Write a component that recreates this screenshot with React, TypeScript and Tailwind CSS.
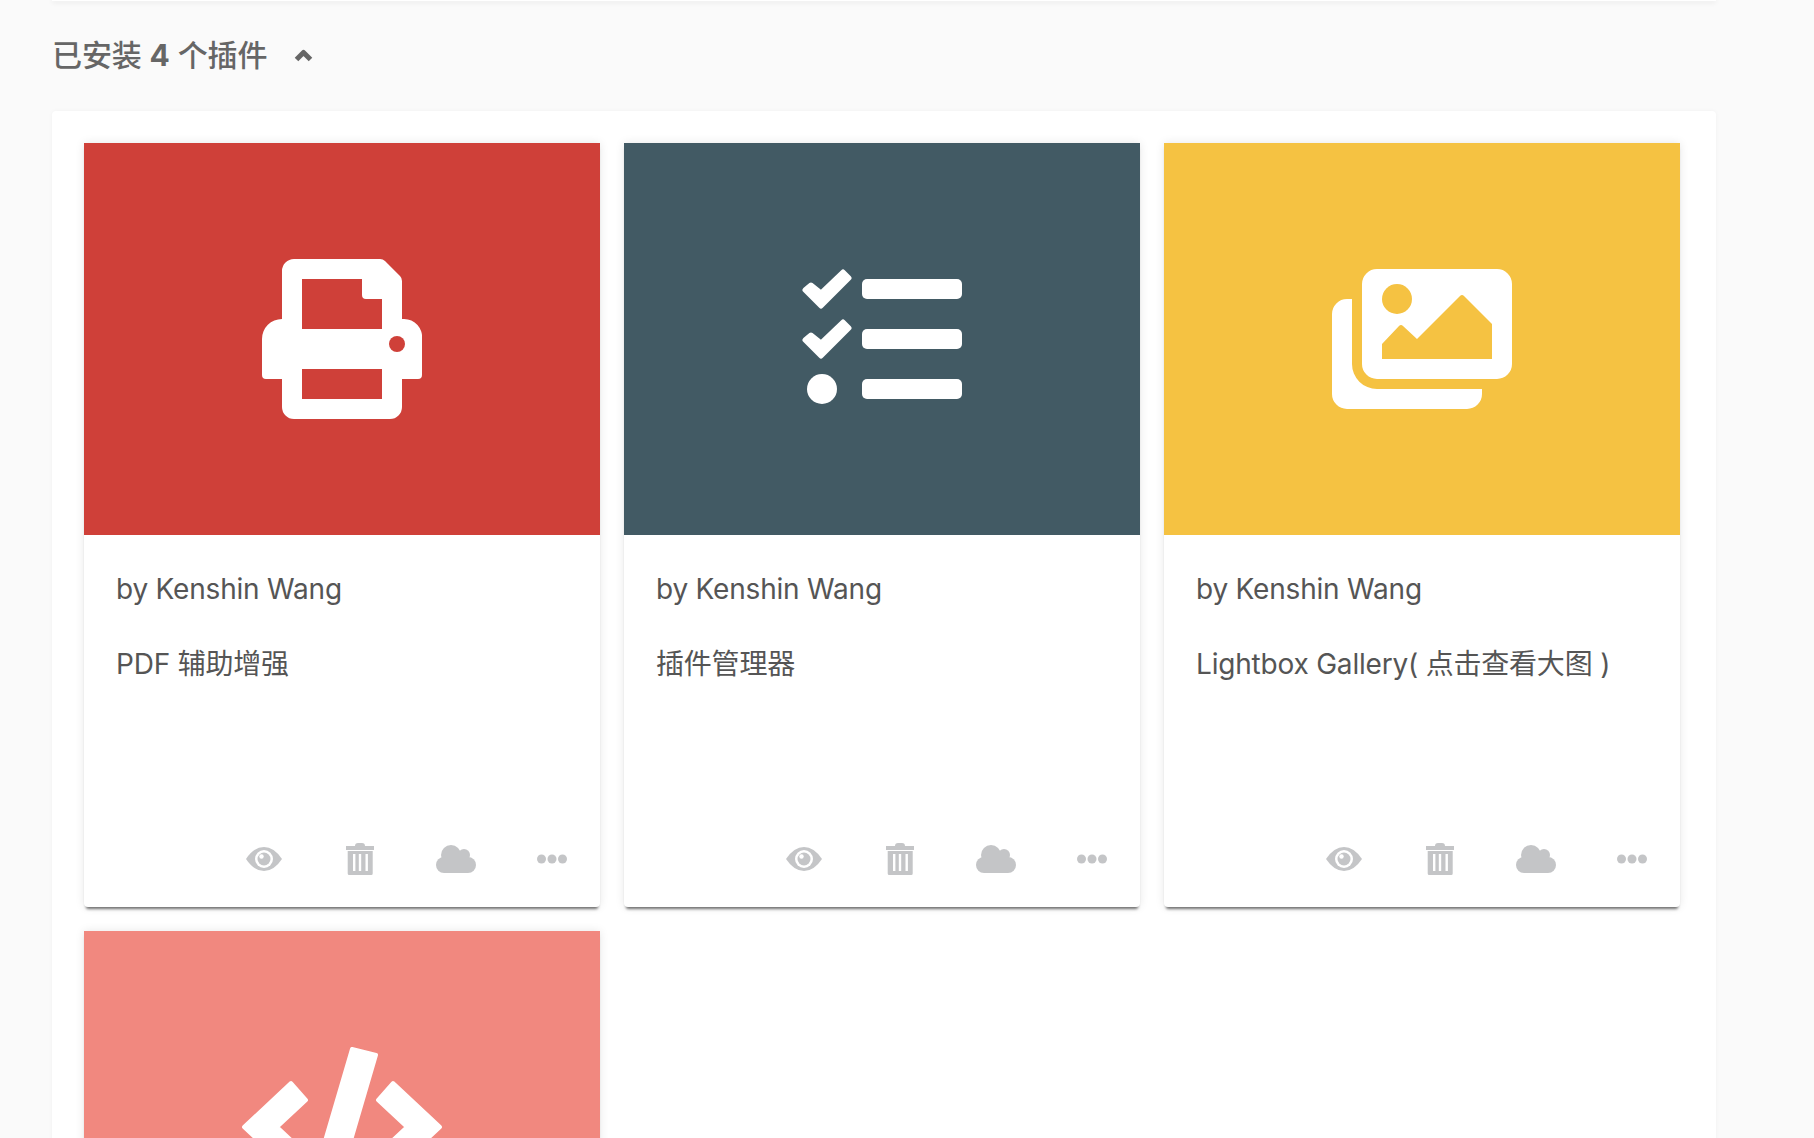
import React from 'react';

// Plugin cover icons, drawn from the reference
const PrinterIcon = () => (
  <svg width="160" height="160" viewBox="0 0 160 160" fill="#fff">
    <path
      fillRule="evenodd"
      d="M20 12a12 12 0 0 1 12-12h86q3 0 5 2l15 15q2 2 2 5v38h2a18 18 0 0 1 18 20v36q0 4-4 4h-16v28a12 12 0 0 1-12 12H32a12 12 0 0 1-12-12v-28H4q-4 0-4-4V80a20 20 0 0 1 20-20zM40 20v50h80V40h-16q-4 0-4-4V20zM40 110v30h80v-30z"
    />
    <circle cx="135" cy="85" r="8" fill="#cf4039" />
  </svg>
);

const ChecklistIcon = () => (
  <svg width="160" height="160" viewBox="0 0 160 160" fill="#fff">
    <path d="M41 13L47 19 19 47 3 31 9 26 19 34z" stroke="#fff" strokeWidth="5" strokeLinejoin="round" />
    <path d="M41 63L47 69 19 97 3 81 9 76 19 84z" stroke="#fff" strokeWidth="5" strokeLinejoin="round" />
    <circle cx="20" cy="130" r="15" />
    <rect x="60" y="20" width="100" height="20" rx="5" />
    <rect x="60" y="70" width="100" height="20" rx="5" />
    <rect x="60" y="120" width="100" height="20" rx="5" />
  </svg>
);

const GalleryIcon = () => (
  <svg width="180" height="160" viewBox="0 0 180 160" fill="#fff">
    <path d="M20 40h-5A15 15 0 0 0 0 55v80a15 15 0 0 0 15 15h120a15 15 0 0 0 15-15v-5H45a25 25 0 0 1-25-25z" />
    <path
      fillRule="evenodd"
      d="M45 10h120a15 15 0 0 1 15 15v80a15 15 0 0 1-15 15H45a15 15 0 0 1-15-15V25a15 15 0 0 1 15-15zM50 85v15h110V65l-28-28q-2-2-4 0L85 80 71 67q-2-2-4 0z"
    />
    <circle cx="65" cy="40" r="15" fill="#f5c242" />
  </svg>
);

const CodeIcon = () => (
  <svg width="200" height="160" viewBox="0 0 200 160" fill="#fff" stroke="#fff" strokeWidth="4" strokeLinejoin="round">
    <path d="M2 80L49 36 64 53 35 80 64 107 49 124z" />
    <path d="M198 80L151 36 136 53 165 80 136 107 151 124z" />
    <path d="M110 2L134 8 90 158 66 152z" />
  </svg>
);

// Card footer actions
const EyeAction = () => (
  <svg width="40" height="40" viewBox="0 0 40 40">
    <path d="M2 20Q10 8 20 8T38 20Q30 32 20 32T2 20z" fill="#c4c5c7" />
    <circle cx="20" cy="20" r="9" fill="#fff" />
    <circle cx="20" cy="20" r="6.5" fill="#c4c5c7" />
    <circle cx="17.5" cy="17.5" r="2.2" fill="#fff" />
  </svg>
);

const TrashAction = () => (
  <svg width="40" height="40" viewBox="0 0 40 40" fill="#c4c5c7">
    <path d="M15 7q0-3 3-3h4q3 0 3 3h9v4H6V7z" />
    <path d="M7.7 12h25v22.5q0 1.500-1.500 1.500h-22q-1.500 0-1.500-1.500z" />
    <rect x="13" y="15" width="2.400" height="17" fill="#fff" />
    <rect x="18.800" y="15" width="2.400" height="17" fill="#fff" />
    <rect x="25.500" y="15" width="2.400" height="17" fill="#fff" />
  </svg>
);

const CloudAction = () => (
  <svg width="40" height="40" viewBox="0 0 40 40" fill="#c4c5c7">
    <circle cx="15" cy="16" r="10" />
    <circle cx="28" cy="16" r="6" />
    <circle cx="32" cy="26" r="8" />
    <circle cx="8" cy="26" r="8" />
    <rect x="8" y="18" width="24" height="16" />
  </svg>
);

const MoreAction = () => (
  <svg width="40" height="40" viewBox="0 0 40 40" fill="#c4c5c7">
    <circle cx="9.500" cy="20" r="4.500" />
    <circle cx="20" cy="20" r="4.500" />
    <circle cx="30.500" cy="20" r="4.500" />
  </svg>
);

interface Plugin {
  name?: string;
  cover: string;
  icon: React.ReactNode;
}

const plugins: Plugin[] = [
  { name: 'PDF 辅助增强', cover: 'bg-[#cf4039]', icon: <PrinterIcon /> },
  { name: '插件管理器', cover: 'bg-[#425a64]', icon: <ChecklistIcon /> },
  { name: 'Lightbox Gallery( 点击查看大图 )', cover: 'bg-[#f5c242]', icon: <GalleryIcon /> },
  // last card runs off the bottom of the page, only its cover shows
  { cover: 'bg-[#f1887f]', icon: <CodeIcon /> },
];

const PluginCard: React.FC<{ plugin: Plugin }> = ({ plugin }) => (
  <div className="flex h-[764px] flex-col rounded-b-[4px] bg-white shadow-[0_0_10px_rgba(0,0,0,0.1),0_4px_3px_-2px_rgba(0,0,0,0.55)]">
    <div className={`flex h-[392px] items-center justify-center ${plugin.cover}`}>{plugin.icon}</div>
    {plugin.name && (
      <div className="flex flex-1 flex-col px-8 pt-[34px] text-[28px] leading-[40px] tracking-[-0.2px] text-[#555]">
        <div>by Kenshin Wang</div>
        <div className="mt-[35px]">{plugin.name}</div>
        <div className="mt-auto -mr-1 mb-7 flex justify-end gap-14">
          <EyeAction />
          <TrashAction />
          <CloudAction />
          <MoreAction />
        </div>
      </div>
    )}
  </div>
);

export default function App() {
  return (
    <div className="h-[1138px] overflow-hidden bg-[#fafafa] pl-[52px] pr-[98px] font-['Inter','Noto_Sans_CJK_SC',sans-serif]">
      {/* Bottom edge of the panel scrolled out above */}
      <div className="h-px bg-white shadow-[0_1px_5px_rgba(0,0,0,0.2)]" />

      <div className="flex h-[110px] items-center pb-[2px] text-[#666]">
        <span className="text-[30px] font-medium tracking-[-0.1px]">
          已安装 <span className="font-bold">4</span> 个插件
        </span>
        <svg className="ml-[27px]" width="19" height="14" viewBox="0 0 19 14" fill="none" stroke="#666" strokeWidth="5" strokeLinejoin="round">
          <path d="M2.500 11.500L9.500 4.500l7 7" />
        </svg>
      </div>

      <div className="grid grid-cols-3 gap-6 rounded-[4px] bg-white pb-8 pl-8 pr-9 pt-8 shadow-[0_0_4px_rgba(0,0,0,0.04)]">
        {plugins.map((plugin) => (
          <PluginCard key={plugin.cover} plugin={plugin} />
        ))}
      </div>
    </div>
  );
}
